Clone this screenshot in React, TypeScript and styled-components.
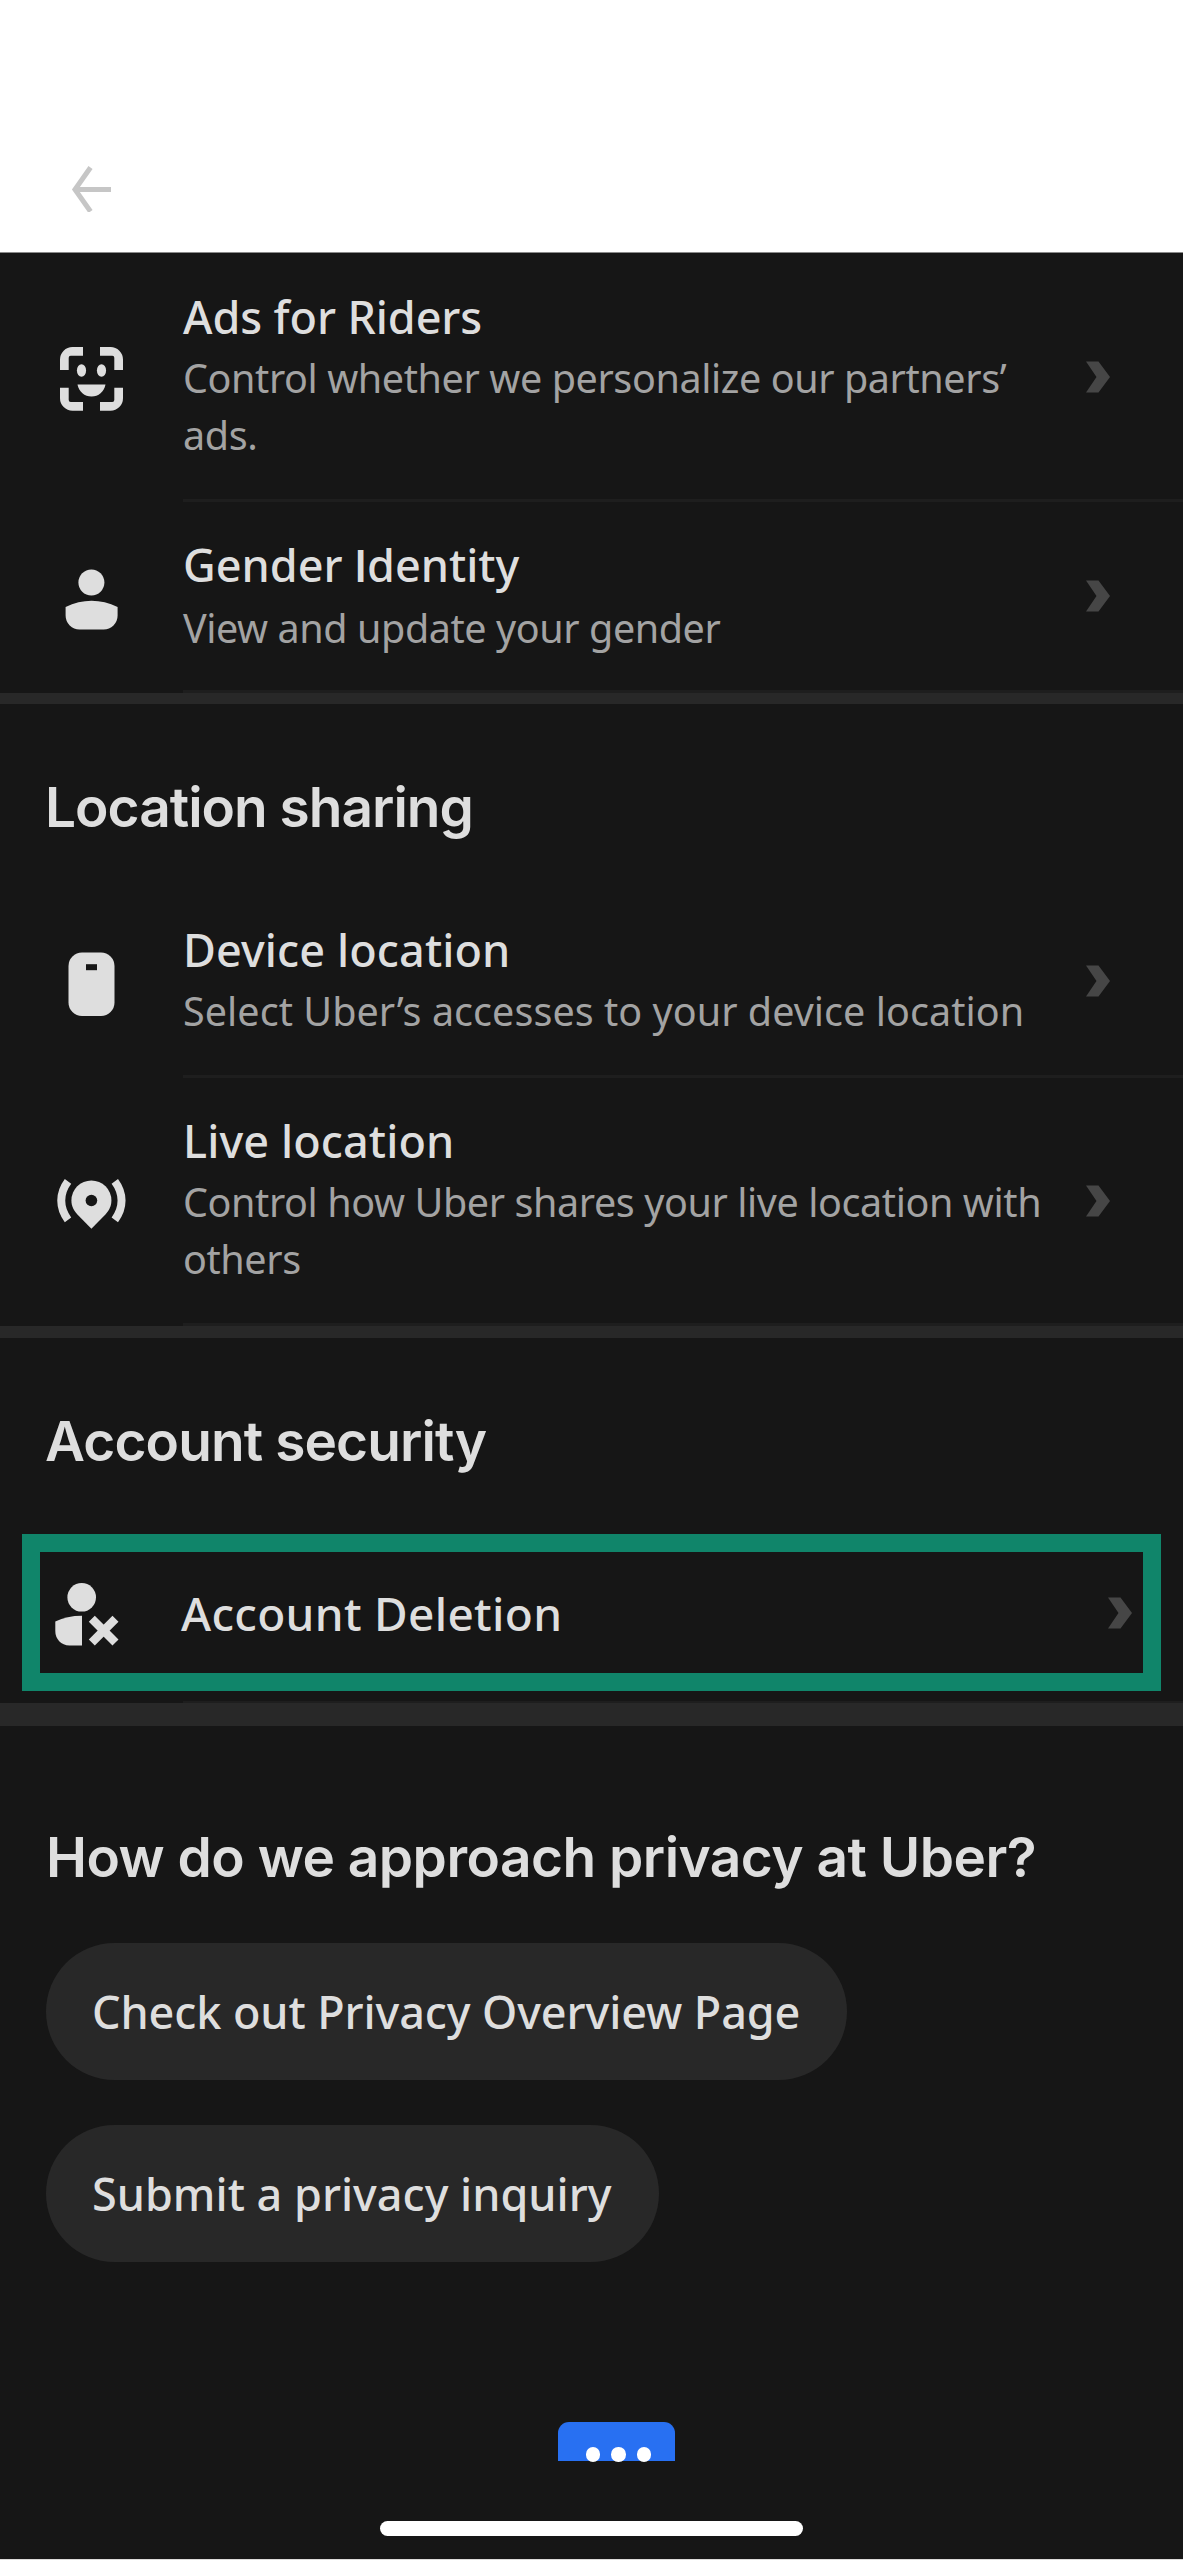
import React from "react";
import styled, { createGlobalStyle } from "styled-components";

const ink = "#dedede";
const muted = "#a3a3a3";
const surface = "#161616";
const raised = "#282828";

const GlobalStyle = createGlobalStyle`
  * { box-sizing: border-box; }
  body { margin: 0; background: ${surface}; }
  h2, p { margin: 0; }
`;

const Screen = styled.main`
  display: flex;
  flex-direction: column;
  height: 2560px;
  background: ${surface};
  border-bottom: 1px solid #dcdad9;
  color: ${ink};
  font-family: "Noto Sans", sans-serif;
  overflow: hidden;
`;

const TopBar = styled.header`
  flex: none;
  display: flex;
  align-items: flex-end;
  height: 253px;
  padding: 0 0 40px 70px;
  background: #fff;
  border-bottom: 1px solid #8a8a8a;
`;

const BackButton = styled.button`
  display: flex;
  padding: 0;
  border: 0;
  background: none;
`;

const List = styled.section<{ $offset?: number }>`
  flex: none;
  padding-top: ${p => p.$offset ?? 0}px;
`;

const Row = styled.div<{ $tall?: boolean }>`
  display: grid;
  grid-template-columns: 183px 1fr;
  height: ${p => (p.$tall ? 248 : 191)}px;
`;

const IconCell = styled.div`
  display: flex;
  align-items: center;
  padding: 5px 0 3px 51px;
`;

const RowBody = styled.div`
  display: flex;
  align-items: center;
  justify-content: space-between;
  padding: 0 73px 0 0;
  border-bottom: 3px solid #1e1e1e;
`;

const RowText = styled.div`
  width: 880px;
  height: 100%;
  padding-top: 35px;
`;

const Title = styled.p<{ $track: number; $size?: number }>`
  font-size: ${p => p.$size ?? 45}px;
  font-weight: 500;
  line-height: 56px;
  letter-spacing: ${p => p.$track}px;
  white-space: nowrap;
`;

const PlainCapital = styled.span`
  font-family: Roboto, sans-serif;
`;

const Subtitle = styled.p<{ $track: number }>`
  margin-top: 5px;
  color: ${muted};
  font-size: 39.5px;
  font-weight: 400;
  line-height: 57px;
  letter-spacing: ${p => p.$track}px;
`;

const Band = styled.div<{ $h: number }>`
  flex: none;
  height: ${p => p.$h}px;
  background: ${raised};
`;

const Heading = styled.h2<{ $track: number }>`
  color: ${ink};
  font-family: Inter, "Noto Sans", sans-serif;
  font-size: 55px;
  font-weight: 600;
  line-height: 70px;
  letter-spacing: ${p => p.$track}px;
  white-space: nowrap;
`;

const HeadingBlock = styled.div`
  height: 183px;
  padding: 68px 0 0 45px;
`;

const Highlight = styled.div`
  display: flex;
  align-items: center;
  height: 157px;
  margin: 13px 22px 10px;
  padding: 1px 11px 0 11px;
  border: 18px solid #10856a;
`;

const HighlightLabel = styled.div`
  flex: 1;
  padding: 0 0 0 50px;
`;

const Hairline = styled.div`
  height: 2px;
  margin-left: 183px;
  background: #1e1e1e;
`;

const Privacy = styled.section`
  flex: 1;
  display: flex;
  flex-direction: column;
  align-items: flex-start;
  padding: 96px 0 0 46px;
`;

const Pills = styled.div`
  display: flex;
  flex-direction: column;
  align-items: flex-start;
  gap: 45px;
  margin-top: 51px;
`;

const Pill = styled.button<{ $w: number }>`
  width: ${p => p.$w}px;
  height: 137px;
  padding: 0 0 0 46px;
  border: 0;
  border-radius: 69px;
  background: ${raised};
  color: ${ink};
  font-family: inherit;
  text-align: left;
`;

const Footer = styled.footer`
  flex: none;
  display: flex;
  flex-direction: column;
  height: 137px;
`;

const ChatTab = styled.div`
  display: flex;
  justify-content: center;
  gap: 11px;
  width: 117px;
  height: 39px;
  margin-left: 558px;
  padding: 25px 0 0 4px;
  border-radius: 11px 11px 0 0;
  background: #2870f2;
`;

const Dot = styled.span`
  width: 14.5px;
  height: 14.5px;
  flex: none;
  border-radius: 50%;
  background: #fff;
`;

const HomeIndicator = styled.div`
  width: 423px;
  height: 15px;
  margin: 60px 0 0 380px;
  border-radius: 8px;
  background: #fff;
`;

const Chevron = () => (
  <svg width="24" height="32" viewBox="0 0 24 32">
    <path d="M0 .5h12.5L24 16 12.5 31.5H0L10.5 16z" fill="#464646" />
  </svg>
);

const BackArrow = () => (
  <svg width="42" height="46" viewBox="0 0 42 46" fill="none" stroke="#c6c6c6" strokeWidth="5">
    <path d="M41 23.500H5M20.500 1.500L5 23.500l15.500 22" />
  </svg>
);

const FaceIcon = () => (
  <svg width="80" height="80" viewBox="51 339 80 80" fill={ink}>
    <path d="M60 370v-10.500a12.500 12.500 0 0 1 12.500-12.500H83v8.700H70.700a2 2 0 0 0-2 2V370z" />
    <path d="M123 370v-10.500a12.500 12.500 0 0 0-12.500-12.500H100v8.700h12.300a2 2 0 0 1 2 2V370z" />
    <path d="M60 387.700v10.500a12.500 12.500 0 0 0 12.500 12.500H83V402H70.700a2 2 0 0 1-2-2V387.700z" />
    <path d="M123 387.700v10.500a12.500 12.500 0 0 1-12.500 12.500H100V402h12.300a2 2 0 0 0 2-2V387.700z" />
    <ellipse cx="81.500" cy="370.500" rx="4.600" ry="6.200" />
    <ellipse cx="101.500" cy="370.500" rx="4.600" ry="6.200" />
    <path d="M77.500 384.500h28c-1.500 7.500-7 12-14 12s-12.500-4.500-14-12z" />
  </svg>
);

const PersonIcon = () => (
  <svg width="80" height="80" viewBox="51 558 80 80" fill={ink}>
    <circle cx="91.400" cy="581.500" r="13" />
    <path d="M65.600 606c17-8.400 35-8.400 52 0v8.500a14 14 0 0 1-14 14h-24a14 14 0 0 1-14-14z" />
  </svg>
);

const DeviceIcon = () => (
  <svg width="80" height="80" viewBox="51 943.500 80 80">
    <rect x="68.500" y="952" width="46" height="63.500" rx="13.500" fill={ink} />
    <rect x="86" y="963.700" width="11" height="6" fill={surface} />
  </svg>
);

const LiveIcon = () => (
  <svg width="80" height="80" viewBox="51 1163 80 80" fill="none">
    <path d="M91.400 1180.500a20 20 0 0 1 20 20c0 6-2.600 10.200-6 14l-14 14.300-14-14.300c-3.400-3.800-6-8-6-14a20 20 0 0 1 20-20z" fill={ink} />
    <circle cx="91.400" cy="1200.500" r="5.800" fill={surface} />
    <path d="M68 1181.300c-9 12-9 26.500 0 38.500M114.800 1181.300c9 12 9 26.500 0 38.500" stroke={ink} strokeWidth="8" />
  </svg>
);

const DeleteAccountIcon = () => (
  <svg width="80" height="80" viewBox="51 1573 80 80" fill={ink}>
    <circle cx="81.700" cy="1597.300" r="14.300" />
    <path d="M55.300 1621.500c8-3.800 16.500-5.700 26.700-5.700v29.700H69.500c-8.500 0-14.200-6.500-14.200-14.500z" />
    <path d="M91.800 1618.700l23.700 23.700M115.500 1618.700l-23.700 23.700" stroke={ink} strokeWidth="8.500" />
  </svg>
);

type ItemProps = {
  icon: React.ReactNode;
  title: React.ReactNode;
  titleTrack?: number;
  text: string;
  textTrack: number;
  tall?: boolean;
};

const Item = ({ icon, title, titleTrack = 0, text, textTrack, tall }: ItemProps) => (
  <Row $tall={tall}>
    <IconCell>{icon}</IconCell>
    <RowBody>
      <RowText>
        <Title $track={titleTrack}>{title}</Title>
        <Subtitle $track={textTrack}>{text}</Subtitle>
      </RowText>
      <Chevron />
    </RowBody>
  </Row>
);

export default function App() {
  return (
    <>
      <GlobalStyle />
      <Screen>
        <TopBar>
          <BackButton aria-label="Back"><BackArrow /></BackButton>
        </TopBar>

        <List $offset={1}>
          <Item tall icon={<FaceIcon />} title="Ads for Riders" titleTrack={-0.1}
            text="Control whether we personalize our partners’ ads." textTrack={-0.4} />
          <Item icon={<PersonIcon />} title={<>Gender <PlainCapital>I</PlainCapital>dentity</>}
            text="View and update your gender" textTrack={-0.42} />
        </List>
        <Band $h={11} />

        <List>
          <HeadingBlock><Heading $track={-1}>Location sharing</Heading></HeadingBlock>
          <Item icon={<DeviceIcon />} title="Device location" titleTrack={0.1}
            text="Select Uber’s accesses to your device location" textTrack={0.05} />
          <Item tall icon={<LiveIcon />} title="Live location" titleTrack={0.1}
            text="Control how Uber shares your live location with others" textTrack={-0.4} />
        </List>
        <Band $h={12} />

        <List>
          <HeadingBlock><Heading $track={-0.9}>Account security</Heading></HeadingBlock>
          <Highlight>
            <DeleteAccountIcon />
            <HighlightLabel>
              <Title $size={46} $track={0.3}>Account Deletion</Title>
            </HighlightLabel>
            <Chevron />
          </Highlight>
          <Hairline />
        </List>
        <Band $h={23} />

        <Privacy>
          <Heading $track={-0.53}>How do we approach privacy at Uber?</Heading>
          <Pills>
            <Pill $w={801}><Title $track={-0.1}>Check out Privacy Overview Page</Title></Pill>
            <Pill $w={613}><Title $track={0}>Submit a privacy inquiry</Title></Pill>
          </Pills>
        </Privacy>

        <Footer>
          <ChatTab><Dot /><Dot /><Dot /></ChatTab>
          <HomeIndicator />
        </Footer>
      </Screen>
    </>
  );
}
